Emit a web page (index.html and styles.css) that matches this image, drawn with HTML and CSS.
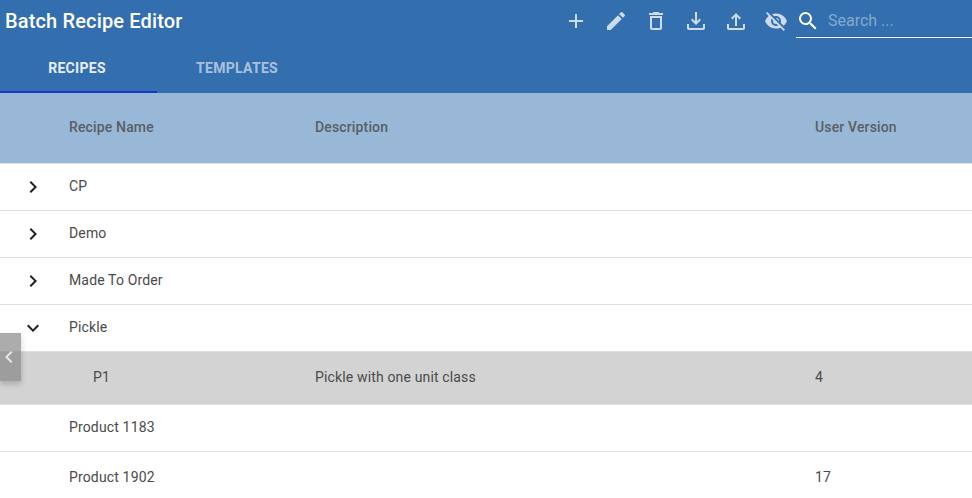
FILE: index.html
```html
<!DOCTYPE html>
<html lang="en">
<head>
    <meta charset="UTF-8">
    <title>Batch Recipe Editor</title>
    <link rel="stylesheet" href="styles.css">
</head>
<body>
    <header class="appbar">
        <div class="toolbar">
            <div class="title">Batch Recipe Editor</div>
            <div class="actions">
                <svg class="tool" viewBox="0 0 24 24"><path d="M19 13h-6v6h-2v-6H5v-2h6V5h2v6h6v2z"/></svg>
                <svg class="tool" viewBox="0 0 24 24"><path d="M3 17.25V21h3.75L17.81 9.94l-3.75-3.75L3 17.25zM20.71 7.04a1 1 0 0 0 0-1.41l-2.34-2.34a1 1 0 0 0-1.41 0l-1.83 1.83 3.75 3.75 1.83-1.83z"/></svg>
                <svg class="tool" viewBox="0 0 24 24"><path d="M6 19c0 1.1.9 2 2 2h8c1.100 0 2-.9 2-2V7H6v12zM8 9h8v10H8V9zm7.500-5-1-1h-5l-1 1H5v2h14V4h-3.500z"/></svg>
                <svg class="tool" viewBox="0 0 24 24"><path d="M19 15v4H5v-4H3v4c0 1.100.9 2 2 2h14c1.100 0 2-.9 2-2v-4h-2zM17 11l-1.410-1.410L13 12.170V3h-2v9.170L8.410 9.590 7 11l5 5 5-5z"/></svg>
                <svg class="tool" viewBox="0 0 24 24"><path d="M19 15v4H5v-4H3v4c0 1.100.9 2 2 2h14c1.100 0 2-.9 2-2v-4h-2zM7 9l1.410 1.410L11 7.830V17h2V7.830l2.590 2.580L17 9l-5-5-5 5z"/></svg>
                <svg class="tool" viewBox="0 0 24 24"><path d="M12 7a5 5 0 0 1 5 5c0 .65-.13 1.260-.36 1.830l2.920 2.920A11.800 11.800 0 0 0 23 12c-1.730-4.390-6-7.500-11-7.500-1.400 0-2.740.25-3.980.7l2.160 2.160C10.740 7.130 11.350 7 12 7zM2 4.270l2.280 2.280.46.46A11.800 11.800 0 0 0 1 12c1.730 4.390 6 7.500 11 7.500 1.550 0 3.030-.3 4.380-.84l.42.42L19.730 22 21 20.730 3.270 3 2 4.270zM7.530 9.800l1.550 1.550A2.800 2.800 0 0 0 9 12a3 3 0 0 0 3 3c.22 0 .44-.03.650-.08l1.550 1.550A5 5 0 0 1 7 12c0-.79.2-1.530.53-2.200zm4.310-.78 3.150 3.150.02-.16a3 3 0 0 0-3-3l-.17.010z"/></svg>
                <div class="search">
                    <svg class="search-icon" viewBox="0 0 24 24"><path d="M15.500 14h-.79l-.28-.27A6.470 6.470 0 0 0 16 9.500 6.500 6.500 0 1 0 9.500 16c1.610 0 3.090-.59 4.230-1.570l.27.28v.79l5 4.990L20.490 19l-4.990-5zm-6 0C7.010 14 5 11.990 5 9.500S7.010 5 9.500 5 14 7.010 14 9.500 11.990 14 9.500 14z"/></svg>
                    <span class="placeholder">Search ...</span>
                </div>
            </div>
        </div>
        <nav class="tabs">
            <div class="tab active">RECIPES</div>
            <div class="tab">TEMPLATES</div>
        </nav>
    </header>

    <div class="table">
        <div class="row head">
            <div class="c-arrow"></div>
            <div class="c-name">Recipe Name</div>
            <div class="c-desc">Description</div>
            <div class="c-ver">User Version</div>
        </div>
        <div class="row">
            <div class="c-arrow"><svg class="chev" viewBox="0 0 24 24"><path d="M10 6 8.590 7.410 13.170 12l-4.580 4.590L10 18l6-6z"/></svg></div>
            <div class="c-name">CP</div>
            <div class="c-desc"></div>
            <div class="c-ver"></div>
        </div>
        <div class="row">
            <div class="c-arrow"><svg class="chev" viewBox="0 0 24 24"><path d="M10 6 8.590 7.410 13.170 12l-4.580 4.590L10 18l6-6z"/></svg></div>
            <div class="c-name">Demo</div>
            <div class="c-desc"></div>
            <div class="c-ver"></div>
        </div>
        <div class="row">
            <div class="c-arrow"><svg class="chev" viewBox="0 0 24 24"><path d="M10 6 8.590 7.410 13.170 12l-4.580 4.590L10 18l6-6z"/></svg></div>
            <div class="c-name">Made To Order</div>
            <div class="c-desc"></div>
            <div class="c-ver"></div>
        </div>
        <div class="row">
            <div class="c-arrow"><svg class="chev" viewBox="0 0 24 24"><path d="M16.590 8.590 12 13.170 7.410 8.590 6 10l6 6 6-6z"/></svg></div>
            <div class="c-name">Pickle</div>
            <div class="c-desc"></div>
            <div class="c-ver"></div>
        </div>
        <div class="row child selected">
            <div class="c-arrow"></div>
            <div class="c-name">P1</div>
            <div class="c-desc">Pickle with one unit class</div>
            <div class="c-ver">4</div>
        </div>
        <div class="row">
            <div class="c-arrow"></div>
            <div class="c-name">Product 1183</div>
            <div class="c-desc"></div>
            <div class="c-ver"></div>
        </div>
        <div class="row last">
            <div class="c-arrow"></div>
            <div class="c-name">Product 1902</div>
            <div class="c-desc"></div>
            <div class="c-ver">17</div>
        </div>
    </div>

    <div class="side-handle">
        <svg viewBox="0 0 24 24"><path d="M15.410 7.410 14 6l-6 6 6 6 1.410-1.410L10.830 12z"/></svg>
    </div>
</body>
</html>
```

FILE: styles.css
```css
* {
    margin: 0;
    padding: 0;
    box-sizing: border-box;
}
html, body {
    height: 100%;
    overflow: hidden;
}
body {
    font-family: 'Roboto', sans-serif;
    background: #fff;
    color: #4a4a4a;
}
.appbar {
    background-color: #336fae;
    height: 93px;
}
.toolbar {
    height: 44px;
    display: flex;
    justify-content: space-between;
    align-items: flex-start;
}
.title {
    color: #fff;
    font-size: 20px;
    font-weight: 500;
    letter-spacing: 0.15px;
    padding: 9px 0 0 5px;
    line-height: 24px;
}
.actions {
    display: flex;
    align-items: flex-start;
}
.tool {
    width: 24px;
    height: 24px;
    margin: 9px 8px 0;
    fill: #cddbea;
}
.search {
    width: 176px;
    height: 38px;
    border-bottom: 1px solid #fff;
    display: flex;
    align-items: center;
}
.search-icon {
    width: 24px;
    height: 24px;
    fill: #fff;
    margin: 4px 0 0 0;
}
.placeholder {
    color: #85a9cf;
    font-size: 16px;
    margin-left: 8px;
    margin-top: 4px;
}
.tabs {
    display: flex;
    height: 49px;
}
.tab {
    width: 157px;
    height: 49px;
    padding: 0 0 2px 3px;
    display: flex;
    align-items: center;
    justify-content: center;
    font-size: 14px;
    font-weight: 700;
    letter-spacing: 0.3px;
    color: #a9c1dc;
}
.tab.active {
    color: #e6edf5;
    padding: 0 3px 0 0;
    border-bottom: 2px solid #1a35c8;
}
.row {
    display: flex;
    align-items: center;
    height: 47px;
    font-size: 14px;
    letter-spacing: 0.15px;
    border-bottom: 1px solid #e0e0e0;
}
.head {
    height: 71px;
    background: #99b7d7;
    font-weight: 500;
    color: #595f66;
}
.selected {
    height: 53px;
    background: #d3d3d3;
}
.last {
    height: 52px;
    border-bottom: none;
}
.c-arrow {
    width: 69px;
    padding-left: 21px;
    display: flex;
    align-items: center;
}
.chev {
    width: 24px;
    height: 24px;
    fill: #212121;
}
.c-name,
.c-desc,
.c-ver {
    padding-bottom: 2px;
}
.c-name {
    width: 246px;
}
.child .c-name {
    padding-left: 24px;
}
.c-desc {
    width: 500px;
}
.side-handle {
    position: absolute;
    left: 0;
    top: 333px;
    width: 21px;
    height: 48px;
    background: rgba(128, 128, 128, 0.65);
    box-shadow: 0 3px 6px rgba(0, 0, 0, 0.2);
    display: flex;
    align-items: center;
}
.side-handle svg {
    width: 24px;
    height: 24px;
    margin-left: -3px;
    flex-shrink: 0;
    fill: #e6e6e6;
}
```
